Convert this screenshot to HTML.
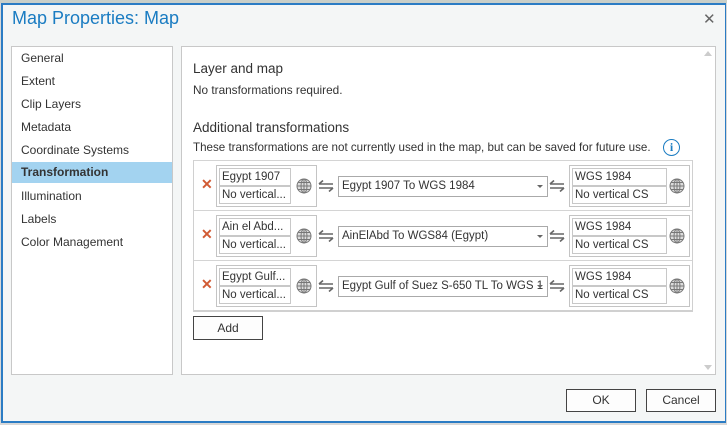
<!DOCTYPE html>
<html><head><meta charset="utf-8"><style>
*{box-sizing:border-box;margin:0;padding:0}
body{width:727px;height:425px;background:#d8d8d8;position:relative;overflow:hidden;font-family:"Liberation Sans",sans-serif;font-size:11px;color:#333}
.a{position:absolute}
#dlg{left:1px;top:3px;width:725px;height:420px;background:#f4f6f6;border:2px solid #2b7cc4;border-right-width:1px}
.list{left:11px;top:46px;width:162px;height:329px;background:#fff;border:1px solid #c8c8c8}
.item{position:absolute;left:0;width:160px;height:21px;line-height:21px;padding-left:9px;font-size:12px;color:#333}
.sel{background:#a3d3f0;font-weight:bold}
.panel{left:181px;top:46px;width:535px;height:329px;background:#fff;border:1px solid #c8c8c8}
.row{position:absolute;left:0;width:498px;height:50px;border-top:1px solid #d4d4d4}
.box{position:absolute;border:1px solid #c4c4c4;background:#fff}
.f{position:absolute;left:2px;width:72px;height:18px;border:1px solid #c8c8c8;padding-left:2px;line-height:16px;white-space:nowrap;overflow:hidden;font-size:11.5px}
.dd{position:absolute;width:210px;height:21px;border:1px solid #aaa;line-height:19px;padding-left:3px;padding-right:12px;font-size:11.5px;background:#fff;white-space:nowrap;overflow:hidden}
.dd:after{content:"";position:absolute;right:4px;top:8px;border:3px solid transparent;border-top:3px solid #666}
.btn{position:absolute;border:1px solid #444;background:#fdfdfd;text-align:center;font-size:12px}
</style></head><body>
<div class="a" style="left:0;top:0;width:727px;height:3px;background:#c9cfc9"></div>
<div id="dlg" class="a"></div>
<div class="a" style="left:12px;top:8px;font-size:18px;color:#1a7cc2">Map Properties: Map</div>
<div class="a" style="left:703px;top:10px;font-size:15px;color:#666">✕</div>

<div class="a list">
<div class="item" style="top:1px">General</div>
<div class="item" style="top:24px">Extent</div>
<div class="item" style="top:47px">Clip Layers</div>
<div class="item" style="top:70px">Metadata</div>
<div class="item" style="top:93px">Coordinate Systems</div>
<div class="item sel" style="top:115px">Transformation</div>
<div class="item" style="top:139px">Illumination</div>
<div class="item" style="top:162px">Labels</div>
<div class="item" style="top:185px">Color Management</div>
</div>

<div class="a panel">
<div class="a" style="right:3px;top:4px;border:4px solid transparent;border-bottom:5px solid #ccc;border-top:0"></div>
<div class="a" style="right:3px;bottom:4px;border:4px solid transparent;border-top:5px solid #ccc;border-bottom:0"></div>
<div class="a" style="left:11px;top:14px;font-size:13.5px;color:#333">Layer and map</div>
<div class="a" style="left:11px;top:36px;font-size:11.8px">No transformations required.</div>
<div class="a" style="left:11px;top:73px;font-size:13.5px;color:#333">Additional transformations</div>
<div class="a" style="left:11px;top:94px;font-size:11.6px;white-space:nowrap">These transformations are not currently used in the map, but can be saved for future use.</div>
<div class="a" style="left:481px;top:92px;width:17px;height:17px;border:1.5px solid #1a7cc2;border-radius:50%;color:#1a7cc2;font:bold 12px 'Liberation Serif',serif;text-align:center;line-height:14px">i</div>

<div class="a" style="left:11px;top:113px;width:500px;height:152px;border:1px solid #d0d0d0;border-top:none">
 <div class="row" style="top:0"></div>
 <div class="row" style="top:50px"></div>
 <div class="row" style="top:100px"></div>
</div>
<div class="a" style="left:11px;top:263px;width:500px;height:1px;background:#d0d0d0"></div>
<div class="btn" style="left:11px;top:269px;width:70px;height:24px;line-height:22px">Add</div>
</div>

<div id="rows"></div>
<script>
var data=[["Egypt 1907","Egypt 1907 To WGS 1984"],["Ain el Abd...","AinElAbd To WGS84 (Egypt)"],["Egypt Gulf...","Egypt Gulf of Suez S-650 TL To WGS 1"]];
var globe='<svg width="16" height="16" viewBox="0 0 16 16"><circle cx="8" cy="8" r="7" fill="#ddd" stroke="#777"/><ellipse cx="8" cy="8" rx="3" ry="7" fill="none" stroke="#777"/><line x1="8" y1="1" x2="8" y2="15" stroke="#777"/><line x1="1" y1="8" x2="15" y2="8" stroke="#777"/><line x1="2" y1="4.5" x2="14" y2="4.5" stroke="#777"/><line x1="2" y1="11.5" x2="14" y2="11.5" stroke="#777"/></svg>';
var arr='<svg width="16" height="12" viewBox="0 0 16 12"><path d="M1 4H15M1 4L5 0.5M15 8H1M15 8L11 11.5" stroke="#666" stroke-width="1.6" fill="none"/></svg>';
var h='';
data.forEach(function(d,i){var y=161+i*50;
h+='<div class="a" style="left:201px;top:'+(y+15)+'px;color:#d15a33;font-size:14px;font-weight:bold">✕</div>';
h+='<div class="box" style="left:216px;top:'+(y+4)+'px;width:101px;height:42px"><div class="f" style="top:2px">'+d[0]+'</div><div class="f" style="top:20px">No vertical...</div><div class="a" style="left:79px;top:12px">'+globe+'</div></div>';
h+='<div class="a" style="left:318px;top:'+(y+19)+'px">'+arr+'</div>';
h+='<div class="dd a" style="left:338px;top:'+(y+15)+'px">'+d[1]+'</div>';
h+='<div class="a" style="left:549px;top:'+(y+19)+'px">'+arr+'</div>';
h+='<div class="box" style="left:569px;top:'+(y+4)+'px;width:121px;height:42px"><div class="f" style="top:2px;width:95px">WGS 1984</div><div class="f" style="top:20px;width:95px">No vertical CS</div><div class="a" style="left:99px;top:12px">'+globe+'</div></div>';
});
document.getElementById('rows').innerHTML=h;
</script>
<div class="btn" style="left:566px;top:389px;width:70px;height:23px;line-height:21px">OK</div>
<div class="btn" style="left:646px;top:389px;width:70px;height:23px;line-height:21px">Cancel</div>
</body></html>
